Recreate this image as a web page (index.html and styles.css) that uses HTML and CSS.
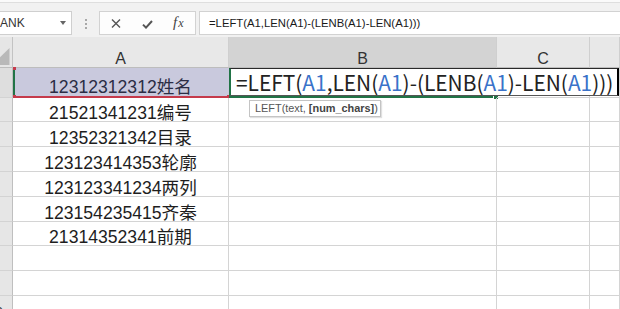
FILE: index.html
```html
<!DOCTYPE html>
<html lang="zh-CN">
<head>
<meta charset="utf-8">
<title>Excel LEFT formula</title>
<link rel="stylesheet" href="styles.css">
</head>
<body>
<div class="app">
  <div class="topstrip"></div>
  <div class="toolbar">
    <div class="namebox">
      <span class="nb-text">ANK</span>
      <svg class="nb-arrow" width="6" height="4" viewBox="0 0 6 4"><path d="M0 0H6L3 4Z" fill="#666"/></svg>
    </div>
    <div class="grip"><i></i><i></i><i></i></div>
    <div class="fbtns">
      <svg class="ic-x" width="10" height="9" viewBox="0 0 10 9"><path d="M1 0.5L9 8.5M9 0.5L1 8.5" stroke="#555" stroke-width="1.4" fill="none"/></svg>
      <svg class="ic-ok" width="11" height="9" viewBox="0 0 11 9"><path d="M1 4.6L4 7.6L10 1" stroke="#555" stroke-width="2" fill="none"/></svg>
      <span class="fx"><i>f</i><i class="fx-x">x</i></span>
    </div>
    <div class="fbar">=LEFT(A1,LEN(A1)-(LENB(A1)-LEN(A1)))</div>
  </div>

  <div class="sheet">
    <div class="corner"><svg width="13" height="31" viewBox="0 0 13 31"><path d="M9.5 11V28H-8Z" fill="#b9b9b9"/></svg></div>
    <div class="ch">A</div>
    <div class="ch ch-active">B</div>
    <div class="ch">C</div>
    <div class="ch"></div>

    <div class="rh rh-active"></div>
    <div class="cell a1">12312312312姓名
      <i class="hd hd-tl"></i><i class="hd hd-bl"></i><i class="hd hd-br"></i>
    </div>
    <div class="cell b1"><i class="fill-handle"></i></div>
    <div class="cell"></div>
    <div class="cell"></div>

    <div class="rh"></div><div class="cell ca">21521341231编号</div><div class="cell"></div><div class="cell"></div><div class="cell"></div>
    <div class="rh"></div><div class="cell ca">12352321342目录</div><div class="cell"></div><div class="cell"></div><div class="cell"></div>
    <div class="rh"></div><div class="cell ca">123123414353轮廓</div><div class="cell"></div><div class="cell"></div><div class="cell"></div>
    <div class="rh"></div><div class="cell ca">123123341234两列</div><div class="cell"></div><div class="cell"></div><div class="cell"></div>
    <div class="rh"></div><div class="cell ca">123154235415齐秦</div><div class="cell"></div><div class="cell"></div><div class="cell"></div>
    <div class="rh"></div><div class="cell ca">21314352341前期</div><div class="cell"></div><div class="cell"></div><div class="cell"></div>
    <div class="rh"></div><div class="cell"></div><div class="cell"></div><div class="cell"></div><div class="cell"></div>
    <div class="rh"></div><div class="cell"></div><div class="cell"></div><div class="cell"></div><div class="cell"></div>
    <div class="rh rh-num">10</div><div class="cell"></div><div class="cell"></div><div class="cell"></div><div class="cell"></div>

    <div class="editor">=LEFT(<span class="ref">A1</span>,LEN(<span class="ref">A1</span>)-(LENB(<span class="ref">A1</span>)-LEN(<span class="ref">A1</span>)))</div>
    <div class="tip">LEFT(text, <b>[num_chars]</b>)</div>
  </div>
</div>
</body>
</html>
```

FILE: styles.css
```css
html, body {
  margin: 0;
  padding: 0;
}
body {
  width: 620px;
  height: 309px;
  overflow: hidden;
  background: #ffffff;
  font-family: "Liberation Sans", "Noto Sans CJK SC", sans-serif;
}
.app {
  width: 620px;
  height: 309px;
  overflow: hidden;
  background: #f1f1f1;
}
.topstrip {
  height: 2px;
  background: #fafafa;
  border-bottom: 1px solid #dedede;
}
.toolbar {
  height: 26px;
  padding-top: 8px;
  display: flex;
  align-items: flex-start;
}
.namebox {
  box-sizing: border-box;
  width: 74px;
  height: 24px;
  margin-left: -2px;
  background: #fff;
  border: 1px solid #cfcfcf;
  display: flex;
  align-items: center;
  font-size: 12px;
  color: #333;
}
.nb-text {
  padding-left: 1px;
}
.nb-arrow {
  margin-left: auto;
  margin-right: 5px;
}
.grip {
  margin-left: 13px;
  margin-top: 8px;
  width: 2px;
  display: flex;
  flex-direction: column;
  gap: 2px;
}
.grip i {
  display: block;
  width: 2px;
  height: 2px;
  background: #a8a8a8;
}
.fbtns {
  box-sizing: border-box;
  margin-left: 12px;
  width: 97px;
  height: 24px;
  background: #fdfdfd;
  border: 1px solid #d2d2d2;
  display: flex;
  align-items: center;
  padding-left: 11px;
}
.ic-x { margin-top: 1px; }
.ic-ok { margin-left: 21px; margin-top: 2px; }
.fx {
  margin-left: 20px;
  font-family: "Liberation Serif", serif;
  color: #444;
  font-size: 15px;
  line-height: 15px;
}
.fx i { font-style: italic; }
.fx .fx-x {
  font-size: 12px;
  margin-left: 1px;
}
.fbar {
  box-sizing: border-box;
  margin-left: 3px;
  flex: 1;
  margin-right: -2px;
  height: 24px;
  background: #fff;
  border: 1px solid #d2d2d2;
  padding-left: 9px;
  font-size: 11.3px;
  line-height: 22px;
  color: #1a1a1a;
  white-space: nowrap;
}

/* grid */
.sheet {
  position: relative;
  display: grid;
  grid-template-columns: 13px 216px 268px 93px 30px;
  grid-template-rows: 31px 30px 24px 25px 25px 25px 25px 24px 25px 25px 25px;
  background: #fff;
}
.corner {
  background: #e6e6e6;
  border-right: 1px solid #c3c3c3;
  border-bottom: 1px solid #bdbdbd;
  box-sizing: border-box;
  overflow: hidden;
}
.corner svg { display: block; }
.ch {
  box-sizing: border-box;
  background: #e8e8e8;
  border-right: 1px solid #cfcfcf;
  border-bottom: 1px solid #bdbdbd;
  text-align: center;
  font-size: 16px;
  line-height: 16px;
  padding-top: 14px;
  color: #333;
}
.ch-active {
  background: #d3d3d3;
}
.rh {
  box-sizing: border-box;
  background: #e6e6e6;
  border-right: 1px solid #bfbfbf;
  border-bottom: 1px solid #d3d3d3;
  overflow: hidden;
}
.rh-active { background: #dedede; }
.rh-num {
  direction: rtl;
  white-space: nowrap;
  font-size: 15px;
  line-height: 18px;
  padding-top: 7px;
  padding-right: 9px;
  color: #444;
}
.cell {
  box-sizing: border-box;
  border-right: 1px solid #d4d4d4;
  border-bottom: 1px solid #d4d4d4;
  position: relative;
}
.ca, .a1 {
  display: flex;
  align-items: flex-end;
  justify-content: center;
  font-size: 17.6px;
  line-height: 16px;
  color: #1e1e1e;
  white-space: nowrap;
}
.a1 {
  background: #c9c9dd;
  color: #2b2d45;
  border-bottom: 2px solid #c53a4b;
  border-right: 1px solid #c9c9dd;
  box-shadow: inset 2px 0 0 #217346;
  padding-bottom: 1px;
}
.hd {
  position: absolute;
  width: 3px;
  height: 3px;
  background: #c53a4b;
}
.hd-tl { left: 0; top: -1px; }
.hd-bl { left: 0; bottom: -2px; }
.hd-br { right: -2px; bottom: -2px; }
.b1 {
  border-bottom: 2px solid #217346;
  box-shadow: inset 2px 0 0 #217346;
}
.fill-handle {
  position: absolute;
  right: -3px;
  bottom: -4px;
  width: 4px;
  height: 4px;
  background: #217346;
  border: 1px solid #fff;
}

/* in-cell editor overlay */
.editor {
  position: absolute;
  left: 229px;
  top: 31px;
  width: 390px;
  height: 28px;
  box-sizing: border-box;
  background: #fff;
  border-top: 1px solid #2a2a2a;
  border-right: 2px solid #000;
  border-bottom: 1px solid #555;
  border-left: 2px solid #217346;
  padding-left: 5px;
  padding-top: 1px;
  font-family: "Noto Sans CJK SC", "Liberation Sans", sans-serif;
  font-size: 20.9px;
  line-height: 24px;
  color: #222;
  white-space: nowrap;
}
.ref { color: #3a72c9; }

.tip {
  position: absolute;
  left: 249px;
  top: 63px;
  width: 132px;
  height: 17px;
  box-sizing: border-box;
  background: #fff;
  border: 1px solid #c4c4c4;
  box-shadow: 1px 1px 1px rgba(0,0,0,0.12);
  padding-left: 5px;
  font-size: 10.9px;
  line-height: 15px;
  color: #555;
  white-space: nowrap;
}
.tip b { color: #444; }
```
